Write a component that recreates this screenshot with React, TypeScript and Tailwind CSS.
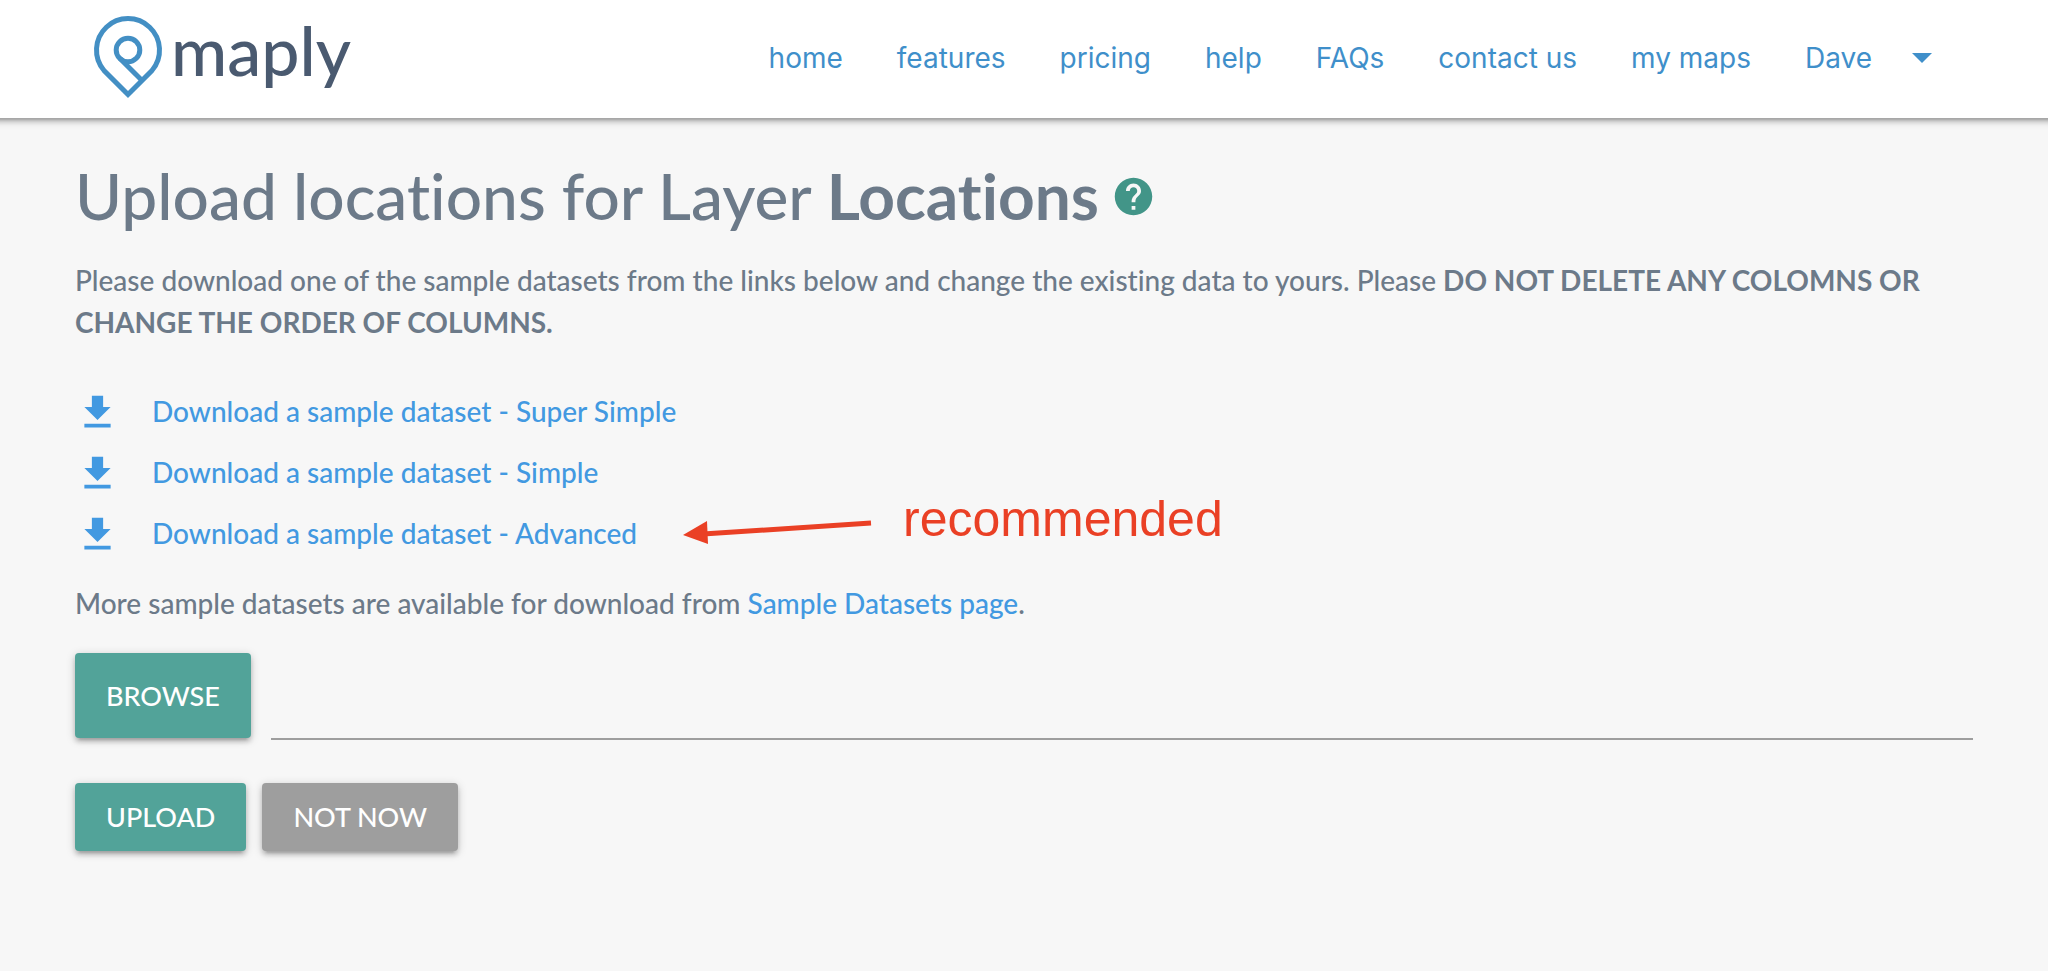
import React from 'react';

const NAV_ITEMS = ['home', 'features', 'pricing', 'help', 'FAQs', 'contact us', 'my maps'];

const SAMPLES = [
  { name: 'Super Simple' },
  { name: 'Simple' },
  { name: 'Advanced', recommended: true },
];

const BUTTON =
  'rounded-sm px-[31px] text-[27px] font-medium text-white uppercase shadow-[0_4px_4px_0_rgba(0,0,0,0.14),0_6px_2px_-4px_rgba(0,0,0,0.12),0_2px_10px_0_rgba(0,0,0,0.2)]';

function Logo() {
  return (
    <a href="#" className="flex items-start gap-2 text-[#4a5a70]">
      <svg viewBox="0 0 70 84" className="h-[84px] w-[70px]" fill="none" stroke="#438fc4" strokeWidth="5">
        <path d="M35 79.500 L11 55.500 A31.500 31.500 0 1 1 59 55.500 Z" />
        <circle cx="35" cy="35" r="11.800" />
        <path d="M26.700 43.300 L48.500 65" />
      </svg>
      <span className="text-[68px] leading-[70px] font-medium">maply</span>
    </a>
  );
}

function HelpIcon() {
  return (
    <svg viewBox="0 0 24 24" className="size-[45px]" fill="currentColor">
      <path d="M12 2C6.480 2 2 6.480 2 12s4.480 10 10 10 10-4.480 10-10S17.520 2 12 2zm1 17h-2v-2h2v2zm2.070-7.750l-.9.920C13.450 12.900 13 13.500 13 15h-2v-.5c0-1.100.45-2.100 1.170-2.830l1.240-1.260c.37-.36.590-.86.590-1.410 0-1.100-.9-2-2-2s-2 .9-2 2H8c0-2.210 1.790-4 4-4s4 1.790 4 4c0 .88-.36 1.680-.93 2.250z" />
    </svg>
  );
}

function DownloadIcon() {
  return (
    <svg viewBox="0 0 24 24" className="size-[45px]" fill="currentColor" aria-hidden="true">
      <path d="M19 9h-4V3H9v6H5l7 7 7-7zM5 18v2h14v-2H5z" />
    </svg>
  );
}

// Wider than the window so that the shadow runs to both edges
function Header() {
  return (
    <header className="-mx-3 flex h-[118px] items-center justify-between bg-white pr-32 pb-1 pl-[105px] shadow-[0_4px_4px_0_rgba(0,0,0,0.14),0_6px_2px_-4px_rgba(0,0,0,0.12),0_2px_10px_0_rgba(0,0,0,0.2)]">
      <Logo />
      <nav className="flex items-center gap-[54px] pt-0.5 font-['Inter',sans-serif] text-[28px] text-[#3f8fca]">
        {NAV_ITEMS.map((item) => (
          <a key={item} href="#">
            {item}
          </a>
        ))}
        <button type="button" className="flex items-center gap-10">
          Dave
          <svg viewBox="0 0 20 10" className="h-[10px] w-5" fill="currentColor" aria-hidden="true">
            <path d="M0 0h20L10 10z" />
          </svg>
        </button>
      </nav>
    </header>
  );
}

function RecommendedNote() {
  return (
    <span className="absolute bottom-[14px] left-full ml-[46px] flex items-end gap-[30px] text-[#ea4025]">
      <svg viewBox="0 0 190 26" className="h-[26px] w-[190px]" aria-hidden="true">
        <path d="M20 16 L188 5" stroke="currentColor" strokeWidth="5" />
        <path d="M0 17 L24 3 L25 26 Z" fill="currentColor" />
      </svg>
      <span className="font-['Liberation_Sans',sans-serif] text-[50px] leading-none font-normal">recommended</span>
    </span>
  );
}

export default function App() {
  return (
    <div className="min-h-screen overflow-x-clip bg-[#f7f7f7] font-['Lato',sans-serif] text-[#6c7a89] [font-variant-ligatures:none]">
      <Header />
      <main className="px-[75px] pt-[38px] text-[28px] leading-[42px] font-medium">
        <h1 className="flex items-center gap-3 text-[64px] leading-[80px] font-medium">
          <span>
            Upload locations for Layer <strong className="font-bold">Locations</strong>
          </span>
          <button type="button" aria-label="Help" className="text-[#429588]">
            <HelpIcon />
          </button>
        </h1>
        <p className="mt-[23px]">
          Please download one of the sample datasets from the links below and change the existing data to yours. Please{' '}
          <strong className="font-bold">DO NOT DELETE ANY COLOMNS OR CHANGE THE ORDER OF COLUMNS.</strong>
        </p>

        <ul className="mt-[39px] text-[#4299e1]">
          {SAMPLES.map((sample) => (
            <li key={sample.name} className="flex h-[61px] items-center">
              <a href="#" className="relative flex items-center gap-8">
                <DownloadIcon />
                <span className="pb-1">Download a sample dataset - {sample.name}</span>
                {sample.recommended && <RecommendedNote />}
              </a>
            </li>
          ))}
        </ul>

        <p className="mt-[17px]">
          More sample datasets are available for download from{' '}
          <a href="#" className="text-[#4299e1]">
            Sample Datasets page
          </a>
          .
        </p>

        <form>
          <div className="mt-[29px] flex items-start gap-5">
            <button type="button" className={`h-[85px] bg-[#52a399] ${BUTTON}`}>
              Browse
            </button>
            <input
              type="text"
              readOnly
              aria-label="Selected file"
              className="h-[87px] min-w-0 flex-1 border-b-2 border-[#9e9e9e] bg-transparent outline-none"
            />
          </div>
          <div className="mt-[43px] flex gap-4">
            <button type="submit" className={`h-[68px] bg-[#52a399] ${BUTTON}`}>
              Upload
            </button>
            <button type="button" className={`h-[68px] bg-[#9e9e9e] ${BUTTON}`}>
              Not now
            </button>
          </div>
        </form>
      </main>
    </div>
  );
}
